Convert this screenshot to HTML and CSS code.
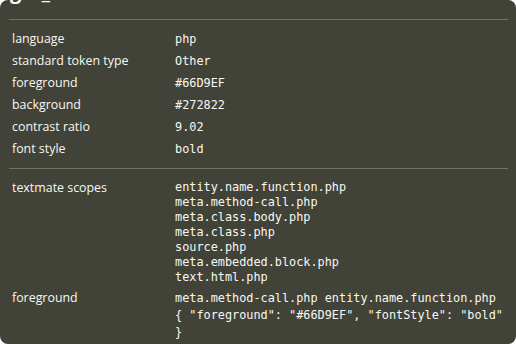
FILE: index.html
```html
<!DOCTYPE html>
<html lang="en">
<head>
    <meta charset="UTF-8">
    <meta name="viewport" content="width=device-width, initial-scale=1.0">
    <title>Inspect Editor Tokens</title>
    <link rel="stylesheet" href="styles.css">
</head>
<body>
    <div class="hover">
        <div class="scroller">
            <div class="token-head">
                <span class="token-text">get_</span>
            </div>
            <hr class="sep">

            <table class="meta">
                <tr><td class="label">language</td><td class="value">php</td></tr>
                <tr><td class="label">standard token type</td><td class="value">Other</td></tr>
                <tr><td class="label">foreground</td><td class="value">#66D9EF</td></tr>
                <tr><td class="label">background</td><td class="value">#272822</td></tr>
                <tr><td class="label">contrast ratio</td><td class="value">9.02</td></tr>
                <tr><td class="label">font style</td><td class="value">bold</td></tr>
            </table>

            <hr class="sep">

            <table class="meta">
                <tr>
                    <td class="label">textmate scopes</td>
                    <td class="value scopes">entity.name.function.php<br>meta.method-call.php<br>meta.class.body.php<br>meta.class.php<br>source.php<br>meta.embedded.block.php<br>text.html.php</td>
                </tr>
                <tr>
                    <td class="label">foreground</td>
                    <td class="value rule">meta.method-call.php entity.name.function.php<br><code>{ "foreground": "#66D9EF", "fontStyle": "bold" }</code></td>
                </tr>
            </table>
        </div>
    </div>
</body>
</html>
```

FILE: styles.css
```css
* {
    margin: 0;
    padding: 0;
    box-sizing: border-box;
}

body {
    background: #ffffff;
    width: 516px;
    height: 344px;
    overflow: hidden;
}

.hover {
    width: 516px;
    height: 344px;
    background: #414238;
    border-radius: 8px;
    overflow: hidden;
    color: #f8f8f2;
    font-family: "Open Sans", "Noto Sans", sans-serif;
    font-size: 12.4px;
}

.scroller {
    padding: 0 8px 0 9px;
    margin-top: -24px;
}

.token-head {
    height: 43px;
    padding: 4px 0 0 1px;
    font-size: 20px;
    font-weight: bold;
    line-height: 24px;
}

.sep {
    border: none;
    border-top: 1px solid #75715e;
    height: 0;
    margin: 0 0 8px 0;
}

.meta + .sep {
    margin: 8px 0 8px 0;
}

.meta {
    border-collapse: collapse;
    width: 100%;
}

.meta td {
    padding: 2px 3px;
    line-height: 18px;
    vertical-align: top;
}

.label {
    width: 163px;
    white-space: nowrap;
}

.value {
    font-family: "DejaVu Sans Mono", "Liberation Mono", monospace;
    font-size: 11.85px;
}

.scopes {
    line-height: 15px !important;
    padding-top: 3px !important;
}

.rule {
    line-height: 17px !important;
    padding-top: 3px !important;
}

.rule code {
    font-family: inherit;
}
```
